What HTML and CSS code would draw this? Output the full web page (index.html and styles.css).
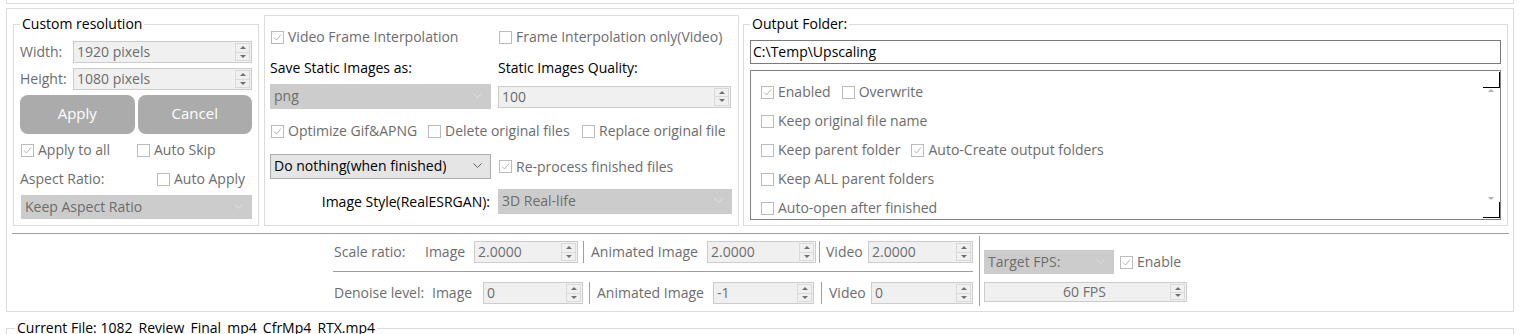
FILE: index.html
```
<!DOCTYPE html>
<html>
	<head>
		<meta charset="UTF-8">
		<title>Upscaling settings</title>
		<link rel="stylesheet" href="styles.css">
	</head>
	<body>
		<div class="topstrip"></div>
		<div class="panel">
			<div class="groups">
				<fieldset class="grp grp-res">
					<legend>Custom resolution</legend>
					<div class="field-row">
						<span class="lbl lbl-res">Width:</span>
						<div class="spin spin-res"><span class="spin-val">1920 pixels</span><span class="spin-btns"><i class="up"></i><i class="dn"></i></span></div>
					</div>
					<div class="field-row field-row2">
						<span class="lbl lbl-res">Height:</span>
						<div class="spin spin-res"><span class="spin-val">1080 pixels</span><span class="spin-btns"><i class="up"></i><i class="dn"></i></span></div>
					</div>
					<div class="btn-row">
						<a href="javascript:;" class="btn">Apply</a>
						<a href="javascript:;" class="btn">Cancel</a>
					</div>
					<div class="cb-row cb-row-apply">
						<label class="chk"><span class="box checked"></span>Apply to all</label>
						<label class="chk"><span class="box"></span>Auto Skip</label>
					</div>
					<div class="cb-row cb-row-aspect">
						<span class="lbl">Aspect Ratio:</span>
						<label class="chk"><span class="box"></span>Auto Apply</label>
					</div>
					<div class="combo combo-off combo-aspect">Keep Aspect Ratio</div>
				</fieldset>

				<fieldset class="grp grp-opts">
					<div class="opt-grid opt-r1">
						<label class="chk"><span class="box checked"></span>Video Frame Interpolation</label>
						<label class="chk"><span class="box"></span>Frame Interpolation only(Video)</label>
					</div>
					<div class="opt-grid opt-r2">
						<span class="lbl on">Save Static Images as:</span>
						<span class="lbl on">Static Images Quality:</span>
					</div>
					<div class="opt-grid opt-r3">
						<div class="combo combo-off combo-col1">png</div>
						<div class="spin spin-quality"><span class="spin-val">100</span><span class="spin-btns"><i class="up"></i><i class="dn"></i></span></div>
					</div>
					<div class="opt-files">
						<label class="chk chk-gif"><span class="box checked"></span>Optimize Gif&amp;APNG</label>
						<label class="chk chk-del"><span class="box"></span>Delete original files</label>
						<label class="chk"><span class="box"></span>Replace original file</label>
					</div>
					<div class="opt-grid opt-r5">
						<div class="combo combo-on combo-col1">Do nothing(when finished)</div>
						<label class="chk"><span class="box checked"></span>Re-process finished files</label>
					</div>
					<div class="opt-grid opt-r6">
						<span class="lbl on lbl-style">Image Style(RealESRGAN):</span>
						<div class="combo combo-off combo-style">3D Real-life</div>
					</div>
				</fieldset>

				<fieldset class="grp grp-out">
					<legend>Output Folder:</legend>
					<div class="textbox">C:\Temp\Upscaling</div>
					<div class="listbox">
						<div class="list-items">
							<div class="list-row">
								<label class="chk"><span class="box checked"></span>Enabled</label>
								<label class="chk"><span class="box"></span>Overwrite</label>
							</div>
							<div class="list-row">
								<label class="chk"><span class="box"></span>Keep original file name</label>
							</div>
							<div class="list-row">
								<label class="chk"><span class="box"></span>Keep parent folder</label>
								<label class="chk"><span class="box checked"></span>Auto-Create output folders</label>
							</div>
							<div class="list-row">
								<label class="chk"><span class="box"></span>Keep ALL parent folders</label>
							</div>
							<div class="list-row">
								<label class="chk"><span class="box"></span>Auto-open after finished</label>
							</div>
						</div>
						<div class="scrollbar">
							<span class="sb-btn"><i class="up"></i></span>
							<span class="sb-btn"><i class="dn"></i></span>
						</div>
					</div>
				</fieldset>
			</div>

			<div class="lower">
				<div class="ratios">
					<div class="ratio-row row-scale">
						<span class="lbl">Scale ratio:</span>
						<span class="lbl">Image</span>
						<div class="spin"><span class="spin-val">2.0000</span><span class="spin-btns"><i class="up"></i><i class="dn"></i></span></div>
						<span class="sep sep-a"></span>
						<span class="lbl">Animated Image</span>
						<div class="spin"><span class="spin-val">2.0000</span><span class="spin-btns"><i class="up"></i><i class="dn"></i></span></div>
						<span class="sep sep-b"></span>
						<span class="lbl">Video</span>
						<div class="spin"><span class="spin-val">2.0000</span><span class="spin-btns"><i class="up"></i><i class="dn"></i></span></div>
					</div>
					<div class="ratio-line"></div>
					<div class="ratio-row row-denoise">
						<span class="lbl">Denoise level:</span>
						<span class="lbl">Image</span>
						<div class="spin"><span class="spin-val">0</span><span class="spin-btns"><i class="up"></i><i class="dn"></i></span></div>
						<span class="sep sep-c"></span>
						<span class="lbl">Animated Image</span>
						<div class="spin"><span class="spin-val">-1</span><span class="spin-btns"><i class="up"></i><i class="dn"></i></span></div>
						<span class="sep sep-d"></span>
						<span class="lbl">Video</span>
						<div class="spin"><span class="spin-val">0</span><span class="spin-btns"><i class="up"></i><i class="dn"></i></span></div>
					</div>
				</div>
				<div class="vsep"></div>
				<div class="fps">
					<div class="fps-top">
						<div class="combo combo-off combo-fps">Target FPS:</div>
						<label class="chk"><span class="box checked"></span>Enable</label>
					</div>
					<div class="spin spin-fps"><span class="spin-val">60 FPS</span><span class="spin-btns"><i class="up"></i><i class="dn"></i></span></div>
				</div>
			</div>
		</div>

		<fieldset class="grp grp-current">
			<legend>Current File: 1082_Review_Final_mp4_CfrMp4_RTX.mp4</legend>
		</fieldset>
	</body>
</html>
```
FILE: styles.css
```
*{
    margin: 0;
    padding: 0;
    box-sizing: border-box;
}
body{
    width: 1520px;
    height: 334px;
    overflow: hidden;
    background: #fff;
    font-family: "Open Sans", "Noto Sans", sans-serif;
    font-size: 14px;
    line-height: 18px;
    color: #6d6d6d;
}
.topstrip{
    margin-left: 6px;
    width: 1508px;
    height: 4px;
    border: 1px solid #dcdcdc;
    border-top: none;
}
.panel{
    margin: 4px 0 0 6px;
    width: 1508px;
    height: 304px;
    border: 1px solid #dcdcdc;
    padding: 6px 5px 0 6px;
}
.groups{
    display: flex;
    height: 211px;
}
.grp{
    min-width: 0;
    border: 1px solid #dcdcdc;
}
.grp legend{
    padding: 0 2px;
    color: #000;
    line-height: 18px;
}
.grp-res{
    width: 246px;
    padding: 8px 6px 0 6px;
}
.grp-opts{
    width: 475px;
    margin-left: 5px;
    padding: 12px 6px 0 5px;
}
.grp-out{
    width: 765px;
    margin-left: 4px;
    padding: 7px 6px 0 6px;
}
.lbl{
    white-space: nowrap;
}
.lbl.on{
    color: #000;
}

/* checkbox */
.chk{
    display: flex;
    align-items: center;
    height: 18px;
    white-space: nowrap;
}
.box{
    flex: none;
    width: 13px;
    height: 13px;
    margin: 0 4px 0 1px;
    border: 1px solid #bcbcbc;
    background: #fff;
}
.box.checked{
    background: #fff url("data:image/svg+xml,%3Csvg xmlns='http://www.w3.org/2000/svg' width='11' height='11'%3E%3Cpolyline points='2,5.5 4.5,8 9,2.5' fill='none' stroke='%23b4b4b4' stroke-width='1'/%3E%3C/svg%3E") no-repeat center;
}

/* spin box */
.spin{
    display: flex;
    height: 22px;
    border: 1px solid #cccccc;
    background: #f0f0f0;
}
.spin-val{
    flex: 1;
    padding-left: 3px;
    line-height: 20px;
    white-space: nowrap;
    overflow: hidden;
}
.spin-btns{
    display: flex;
    flex-direction: column;
    width: 15px;
    margin: 1px 1px 1px 0;
}
.spin-btns i{
    flex: 1;
    display: flex;
    align-items: center;
    justify-content: center;
    border: 1px solid #dadada;
}
.spin-btns i + i{
    border-top: none;
}
.up::before,
.dn::before{
    content: "";
    border-left: 3px solid transparent;
    border-right: 3px solid transparent;
}
.up::before{
    border-bottom: 3px solid #707070;
}
.dn::before{
    border-top: 3px solid #707070;
}

/* combo box */
.combo{
    position: relative;
    height: 24px;
    padding-left: 3px;
    line-height: 22px;
    border: 1px solid #cccccc;
    white-space: nowrap;
}
.combo::after{
    content: "";
    position: absolute;
    right: 8px;
    top: 8px;
    width: 9px;
    height: 5px;
    background: url("data:image/svg+xml,%3Csvg xmlns='http://www.w3.org/2000/svg' width='9' height='5'%3E%3Cpolyline points='0.5,0.5 4.5,4.5 8.5,0.5' fill='none' stroke='%23e0e0e0' stroke-width='1'/%3E%3C/svg%3E") no-repeat;
}
.combo-off{
    background: #cccccc;
}
.combo-on{
    background: #e5e5e5;
    border-color: #adadad;
    color: #000;
}
.combo-on::after{
    background: url("data:image/svg+xml,%3Csvg xmlns='http://www.w3.org/2000/svg' width='9' height='5'%3E%3Cpolyline points='0.5,0.5 4.5,4.5 8.5,0.5' fill='none' stroke='%23606060' stroke-width='1'/%3E%3C/svg%3E") no-repeat;
}

/* custom resolution */
.field-row{
    display: flex;
    align-items: center;
    height: 22px;
}
.field-row2{
    margin-top: 5px;
}
.lbl-res{
    width: 53px;
}
.spin-res{
    flex: 1;
}
.btn-row{
    display: flex;
    gap: 3px;
    margin-top: 5px;
}
.btn{
    flex: 1;
    height: 39px;
    line-height: 37px;
    text-align: center;
    border-radius: 8px;
    background: #ababab;
    color: #fff;
    font-size: 15px;
    text-decoration: none;
}
.cb-row{
    display: grid;
    align-items: center;
    height: 18px;
}
.cb-row-apply{
    grid-template-columns: 116px auto;
    margin-top: 7px;
}
.cb-row-aspect{
    grid-template-columns: 136px auto;
    margin-top: 11px;
}
.combo-aspect{
    margin: 7px 0 0 1px;
}

/* options */
.opt-grid{
    display: grid;
    grid-template-columns: 228px 234px;
    align-items: center;
}
.opt-r1{
    height: 18px;
}
.opt-r2{
    height: 18px;
    margin-top: 13px;
}
.opt-r3{
    height: 25px;
    margin-top: 7px;
}
.combo-col1{
    width: 221px;
    height: 25px;
}
.spin-quality{
    width: 233px;
}
.opt-files{
    display: flex;
    height: 18px;
    margin-top: 13px;
}
.chk-gif{
    width: 157px;
}
.chk-del{
    width: 154px;
}
.opt-r5{
    height: 25px;
    margin-top: 14px;
}
.opt-r6{
    height: 25px;
    margin-top: 10px;
}
.lbl-style{
    text-align: right;
    padding-right: 8px;
}
.combo-style{
    height: 25px;
}

/* output folder */
.textbox{
    height: 24px;
    padding-left: 2px;
    line-height: 22px;
    border: 1px solid #7a7a7a;
    background: #fff;
    color: #000;
}
.listbox{
    display: flex;
    height: 150px;
    margin-top: 6px;
    border: 1px solid #828282;
    background: #fff;
}
.list-items{
    flex: 1;
    display: flex;
    flex-direction: column;
    gap: 11px;
    padding: 12px 0 0 9px;
    overflow: hidden;
}
.list-row{
    display: flex;
    gap: 10px;
}
.scrollbar{
    display: flex;
    flex-direction: column;
    justify-content: space-between;
    width: 17px;
    padding: 1px 0;
}
.sb-btn{
    display: flex;
    align-items: center;
    justify-content: center;
    height: 16px;
    border-right: 1px solid #000;
    border-bottom: 1px solid #000;
}
.sb-btn .up::before{
    border-bottom-color: #b0b0b0;
}
.sb-btn .dn::before{
    border-top-color: #b0b0b0;
}

/* lower section */
.lower{
    display: flex;
    margin: 7px -1px 0 -1px;
    padding-left: 322px;
    border-top: 1px solid #a0a0a0;
}
.ratios{
    width: 639px;
    padding-top: 7px;
}
.ratio-row{
    display: grid;
    align-items: center;
}
.row-scale{
    height: 22px;
    grid-template-columns: 91px 49px 104px 13px 116px 109px 10px 42px 105px;
}
.row-denoise{
    height: 21px;
    margin-top: 10px;
    grid-template-columns: 98px 51px 100px 14px 116px 101px 15px 42px 102px;
}
.row-scale .spin,
.row-denoise .spin{
    height: 100%;
}
.sep{
    width: 1px;
    height: 22px;
    background: #a0a0a0;
}
.sep-a{
    margin-left: 5px;
}
.sep-b{
    margin-left: 3px;
}
.sep-c{
    margin-left: 6px;
}
.sep-d{
    margin-left: 7px;
}
.ratio-line{
    margin: 8px 0 0 -1px;
    border-top: 1px solid #a0a0a0;
}
.vsep{
    width: 1px;
    height: 70px;
    margin: 2px 4px 0 6px;
    background: #a0a0a0;
}
.fps{
    padding-top: 16px;
}
.fps-top{
    display: flex;
    align-items: center;
    gap: 5px;
}
.combo-fps{
    width: 130px;
}
.spin-fps{
    width: 203px;
    height: 20px;
    margin-top: 8px;
}
.spin-fps .spin-val{
    text-align: center;
    line-height: 18px;
    padding-left: 14px;
}

.grp-current{
    margin: 7px 0 0 6px;
    width: 1508px;
    height: 15px;
    padding-left: 8px;
}
```
